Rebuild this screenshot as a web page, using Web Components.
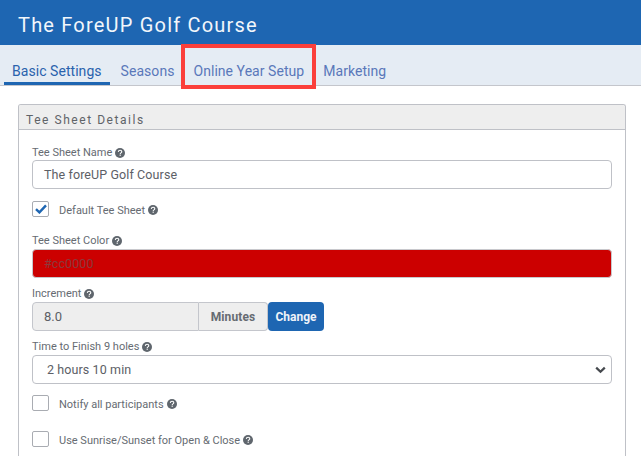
<!DOCTYPE html>
<html>
<head>
<meta charset="utf-8">
<style>
html, body { margin: 0; padding: 0; background: #fff; overflow: hidden; }
body { height: 456px; font-family: Roboto, "Liberation Sans", sans-serif; }
</style>
</head>
<body>
<app-header>The ForeUP Golf Course</app-header>
<tab-bar>
  <tab-item active>Basic Settings</tab-item>
  <tab-item>Seasons</tab-item>
  <tab-item marked>Online Year Setup</tab-item>
  <tab-item>Marketing</tab-item>
</tab-bar>
<details-panel heading="Tee Sheet Details">
  <form-field label="Tee Sheet Name" style="--label-gap:0px;margin-bottom:12px">
    <text-box>The foreUP Golf Course</text-box>
  </form-field>
  <check-row checked style="margin-bottom:15px">Default Tee Sheet</check-row>
  <form-field label="Tee Sheet Color" style="margin-bottom:7px">
    <text-box color>#cc0000</text-box>
  </form-field>
  <form-field label="Increment" style="margin-bottom:7px">
    <increment-group value="8.0" unit="Minutes" action="Change"></increment-group>
  </form-field>
  <form-field label="Time to Finish 9 holes" style="margin-bottom:11px">
    <text-box select>2 hours 10 min</text-box>
  </form-field>
  <check-row style="margin-bottom:20px">Notify all participants</check-row>
  <check-row>Use Sunrise/Sunset for Open &amp; Close</check-row>
</details-panel>

<script>
const helpIcon = `<svg class="help" width="10" height="10" viewBox="0 0 10 10"><circle cx="5" cy="5" r="5" fill="#5f666d"/><path d="M3.3 3.9C3.4 2.9 4.1 2.3 5.1 2.3C6.1 2.3 6.8 2.9 6.8 3.7C6.8 4.9 5.2 4.8 5.2 6" fill="none" stroke="#fff" stroke-width="1.1"/><rect x="4.6" y="6.6" width="1.2" height="1.2" fill="#fff"/></svg>`;

class AppHeader extends HTMLElement {
  constructor() {
    super();
    this.attachShadow({mode: "open"}).innerHTML = `
      <style>
        :host { display: block; height: 45px; background: #1e66b2; color: #f2f6fb; box-sizing: border-box; padding: 12px 0 0 18px; font-size: 20px; line-height: 26px; letter-spacing: 1.2px; }
      </style>
      <slot></slot>`;
  }
}

class TabBar extends HTMLElement {
  constructor() {
    super();
    this.attachShadow({mode: "open"}).innerHTML = `
      <style>
        :host { display: flex; height: 41px; box-sizing: border-box; background: #e5ecf4; border-bottom: 1px solid #c4c6cc; padding: 0 0 0 4px; }
      </style>
      <slot></slot>`;
  }
}

class TabItem extends HTMLElement {
  constructor() {
    super();
    this.attachShadow({mode: "open"}).innerHTML = `
      <style>
        :host { display: block; position: relative; box-sizing: border-box; height: 40px; padding: 17px 8px 0; margin-right: 3px; font-size: 14px; line-height: 18px; letter-spacing: .05px; color: #5a78ba; white-space: nowrap; }
        :host([active]) { color: #2a62ad; border-bottom: 3px solid #1e66b2; }
        .mark { display: none; position: absolute; left: -4px; right: -4px; top: -1px; height: 45px; box-sizing: border-box; border: 4px solid #fb3f3b; }
        :host([marked]) .mark { display: block; }
      </style>
      <slot></slot><div class="mark"></div>`;
  }
}

class DetailsPanel extends HTMLElement {
  constructor() {
    super();
    this.attachShadow({mode: "open"}).innerHTML = `
      <style>
        :host { display: block; box-sizing: border-box; margin: 18px 15px 0 18px; border: 1px solid #bfc1c7; border-bottom: 0; border-radius: 3px 3px 0 0; height: 352px; overflow: hidden; }
        .head { height: 25px; box-sizing: border-box; background: #eeeeee; border-bottom: 1px solid #bfc1c7; padding: 7px 0 0 7px; font-size: 12px; line-height: 17px; letter-spacing: 1.55px; color: #5f6368; }
        .body { padding: 14px 13px 0 13px; }
      </style>
      <div class="head">${this.getAttribute("heading")}</div>
      <div class="body"><slot></slot></div>`;
  }
}

class FormField extends HTMLElement {
  constructor() {
    super();
    this.attachShadow({mode: "open"}).innerHTML = `
      <style>
        :host { display: block; }
        .label { display: flex; align-items: center; gap: 3px; box-sizing: border-box; height: 16px; padding-top: 2px; margin-bottom: var(--label-gap, 1px); font-size: 11px; color: #666b72; line-height: 14px; white-space: nowrap; }
      </style>
      <div class="label">${this.getAttribute("label")} ${helpIcon}</div>
      <slot></slot>`;
  }
}

class TextBox extends HTMLElement {
  constructor() {
    super();
    this.attachShadow({mode: "open"}).innerHTML = `
      <style>
        :host { display: flex; align-items: center; justify-content: space-between; box-sizing: border-box; height: 29px; padding: 0 5px 0 11px; background: #fff; border: 1px solid #bfc1c7; border-radius: 4px; font-size: 12.5px; color: #5c6066; letter-spacing: .1px; }
        :host([color]) { background: #cc0000; border-color: #c8c8cc; color: #8a3a3c; }
        :host([select]) { padding-left: 14px; }
        svg { display: none; }
        :host([select]) svg { display: block; }
      </style>
      <slot></slot>
      <svg width="11" height="8" viewBox="0 0 11 8"><path d="M1.2 1.6L5.5 5.8L9.8 1.6" fill="none" stroke="#45494e" stroke-width="2.2"/></svg>`;
  }
}

class CheckRow extends HTMLElement {
  constructor() {
    super();
    this.attachShadow({mode: "open"}).innerHTML = `
      <style>
        :host { display: flex; align-items: center; height: 16px; font-size: 11px; color: #666b72; white-space: nowrap; }
        .box { flex: none; width: 17px; height: 16px; box-sizing: border-box; border: 1px solid #a9acb2; border-radius: 2px; background: #fff; margin-right: 10px; display: flex; align-items: center; justify-content: center; }
        .tick { display: none; }
        :host([checked]) .tick { display: block; }
        .text { display: flex; align-items: center; gap: 3px; padding-top: 2px; }
      </style>
      <div class="box"><svg class="tick" width="12" height="10" viewBox="0 0 12 10"><path d="M1 5.2L4.4 8.4L11 1.4" fill="none" stroke="#1e66b2" stroke-width="2.4"/></svg></div>
      <div class="text"><span><slot></slot></span>${helpIcon}</div>`;
  }
}

class IncrementGroup extends HTMLElement {
  constructor() {
    super();
    this.attachShadow({mode: "open"}).innerHTML = `
      <style>
        :host { display: flex; height: 29px; }
        .value, .unit { box-sizing: border-box; background: #eeeeee; border: 1px solid #c4c6cc; display: flex; align-items: center; }
        .value { width: 167px; padding-left: 11px; font-size: 13px; color: #5c6066; border-radius: 4px 0 0 4px; }
        .unit { width: 69px; border-left: 0; justify-content: center; font-size: 12px; font-weight: 700; letter-spacing: .1px; color: #666b72; border-radius: 0 4px 4px 0; }
        .action { width: 56px; background: #1e66b2; color: #eef3f9; border-radius: 4px; display: flex; align-items: center; justify-content: center; font-size: 12px; font-weight: 700; }
      </style>
      <div class="value">${this.getAttribute("value")}</div>
      <div class="unit">${this.getAttribute("unit")}</div>
      <div class="action">${this.getAttribute("action")}</div>`;
  }
}

customElements.define("app-header", AppHeader);
customElements.define("tab-bar", TabBar);
customElements.define("tab-item", TabItem);
customElements.define("details-panel", DetailsPanel);
customElements.define("form-field", FormField);
customElements.define("text-box", TextBox);
customElements.define("check-row", CheckRow);
customElements.define("increment-group", IncrementGroup);
</script>
</body>
</html>
